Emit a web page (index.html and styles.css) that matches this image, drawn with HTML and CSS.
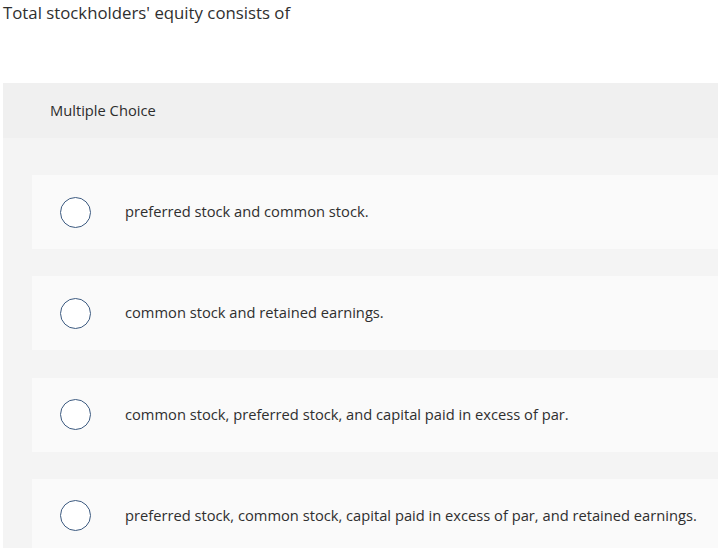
FILE: index.html
```html
<!DOCTYPE html>
<html>
<head>
<meta charset="utf-8">
<link rel="stylesheet" href="styles.css">
</head>
<body>
<p class="question">Total stockholders' equity consists of</p>
<div class="mc">
  <div class="mc-header">Multiple Choice</div>
  <div class="mc-body">
    <div class="option"><span class="radio"></span><span class="label">preferred stock and common stock.</span></div>
    <div class="option"><span class="radio"></span><span class="label">common stock and retained earnings.</span></div>
    <div class="option"><span class="radio"></span><span class="label">common stock, preferred stock, and capital paid in excess of par.</span></div>
    <div class="option"><span class="radio"></span><span class="label">preferred stock, common stock, capital paid in excess of par, and retained earnings.</span></div>
  </div>
</div>
</body>
</html>
```
FILE: styles.css
```css
html, body {
  margin: 0;
  padding: 0;
  background: #ffffff;
  font-family: "Open Sans", Lato, sans-serif;
  color: #333333;
  height: 548px;
  overflow: hidden;
}
.question {
  margin: 0;
  padding: 3px 0 0 3px;
  font-size: 16.8px;
  line-height: 20px;
  color: #2f2f2f;
}
.mc {
  margin: 60px 0 0 3px;
  background: #f4f4f4;
  height: 465px;
  overflow: hidden;
}
.mc-header {
  height: 55px;
  box-sizing: border-box;
  padding-bottom: 2px;
  background: #f0f0f0;
  display: flex;
  align-items: center;
  padding-left: 47px;
  font-size: 14.7px;
  color: #2d2d2d;
}
.mc-body {
  padding: 37px 0 0 29px;
  display: flex;
  flex-direction: column;
  gap: 27.3px;
}
.option {
  height: 74px;
  flex: none;
  background: #fafafa;
  display: flex;
  align-items: center;
  padding-left: 28px;
}
.radio {
  box-sizing: border-box;
  width: 31px;
  height: 31px;
  border: 1.5px solid #3c5a80;
  border-radius: 50%;
  background: #ffffff;
  flex: none;
}
.label {
  margin-left: 34px;
  margin-bottom: 2px;
  font-size: 14.7px;
  color: #2f2f2f;
}
```
